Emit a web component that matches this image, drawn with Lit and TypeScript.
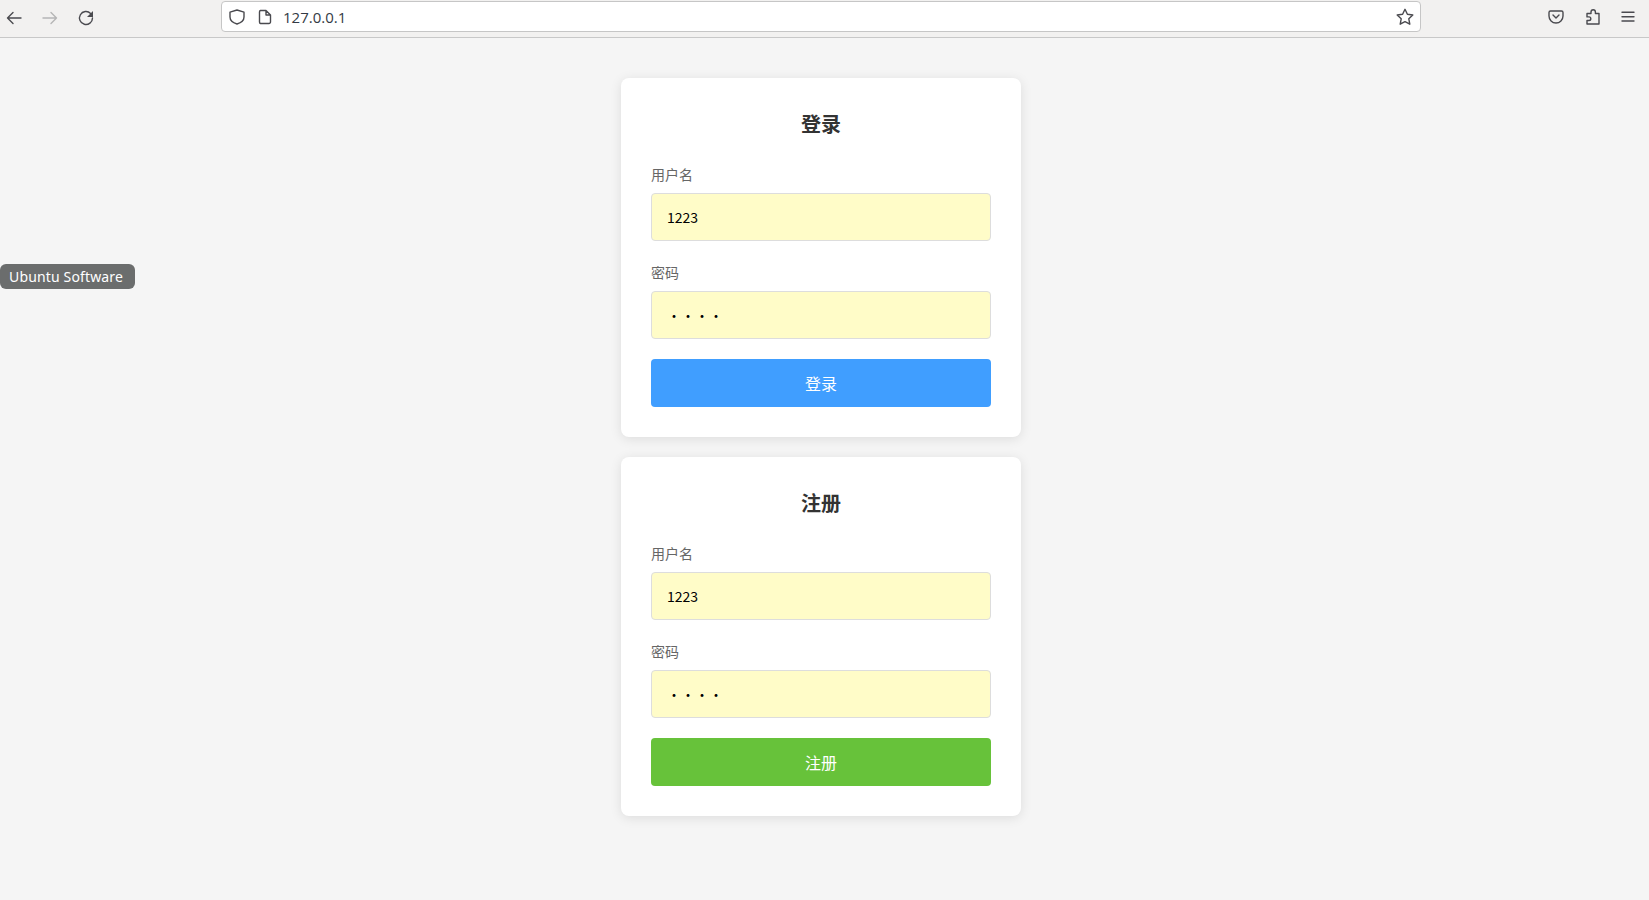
import { LitElement, html, css, svg } from "lit";
import { customElement } from "lit/decorators.js";

const ico = (body: unknown, color = "#4a4a4f", sw = 1.4) => html`<svg class="ico" width="18" height="18" viewBox="0 0 18 18" fill="none" stroke=${color} stroke-width=${sw} stroke-linecap="round" stroke-linejoin="round">${body}</svg>`;

@customElement("app-root")
export class AppRoot extends LitElement {
  static styles = css`
    :host { display: block; width: 1649px; height: 900px; background: #f5f5f5; position: relative; overflow: hidden; font-family: "Noto Sans CJK SC", "Noto Sans", sans-serif; }
    .bar { height: 37px; box-sizing: content-box; background: #f2f1f0; border-bottom: 1px solid #c8c8c8; display: flex; align-items: flex-start; padding-left: 5px; }
    .nav { display: flex; align-items: center; gap: 18px; width: 216px; padding-top: 9px; }
    .ico { display: block; flex: none; }
    .url { width: 1200px; height: 31px; margin-top: 1px; box-sizing: border-box; background: #fff; border: 1px solid #c6c6c6; border-radius: 4px; display: flex; align-items: center; padding: 0 6px; gap: 10px; font: 15px "Open Sans", "Noto Sans", sans-serif; color: #333a45; }
    .url .addr { flex: 1; margin-left: -1px; }
    .right { display: flex; align-items: center; gap: 18px; margin-left: 126px; padding-top: 8px; }
    .main { display: flex; flex-direction: column; align-items: center; gap: 20px; padding-top: 40px; width: 1642px; }
    .card { width: 400px; box-sizing: border-box; background: #fff; border-radius: 8px; padding: 30px; box-shadow: 0 2px 12px rgba(0,0,0,.1); }
    h2 { margin: 0 0 24px; height: 31px; font-size: 20px; line-height: 32px; font-weight: 700; text-align: center; color: #333; }
    .field { margin-bottom: 20px; }
    label { display: block; font-size: 14px; line-height: 22px; color: #666; margin-bottom: 8px; }
    input { display: block; width: 100%; height: 48px; box-sizing: border-box; padding: 0 15px; border: 1px solid #ddd; border-radius: 4px; background: #fffcc8; color: #000; font: 14px "Noto Sans CJK SC", sans-serif; outline: none; }
    button { display: block; width: 100%; height: 48px; border: 0; border-radius: 4px; color: #fff; font: 16px "Noto Sans CJK SC", sans-serif; }
    .blue { background: #409eff; }
    .green { background: #67c23a; }
    .tip { position: absolute; left: 0; top: 264px; width: 135px; height: 25px; box-sizing: border-box; background: #6b6d6d; border-radius: 6px; color: #fff; font: 14px/25px "Noto Sans", sans-serif; letter-spacing: .15px; padding-left: 9px; }
  `;
  card(title: string, cls: string) {
    return html`<section class="card">
      <h2>${title}</h2>
      <div class="field"><label>用户名</label><input type="text" value="1223" /></div>
      <div class="field"><label>密码</label><input type="password" value="1223" /></div>
      <button class=${cls}>${title}</button>
    </section>`;
  }
  render() {
    return html`
      <div class="bar">
        <div class="nav">
          ${ico(svg`<path d="M16 9H2.500M8 3.500L2.500 9 8 14.500"/>`)}
          ${ico(svg`<path d="M2 9h13.500M10 3.500L15.500 9 10 14.500"/>`, "#b5b5b6")}
          <svg class="ico" width="18" height="18" viewBox="0 0 18 18" fill="none" stroke="#4a4a4f" stroke-width="1.4" stroke-linecap="round"><path d="M13.600 4.400A6.500 6.500 0 1 0 15.500 9"/><path d="M16 2v6h-6z" fill="#4a4a4f" stroke="none"/></svg>
        </div>
        <div class="url">
          ${ico(svg`<path d="M9 2l7 2.200V9c0 3.500-3 5.800-7 7-4-1.200-7-3.500-7-7V4.200z"/>`)}
          ${ico(svg`<path d="M4.500 2.500h5.500l4.500 4.500v7a1.500 1.500 0 0 1-1.500 1.500H4.500A1.500 1.500 0 0 1 3.500 14V4a1.500 1.500 0 0 1 1-1.500zM10 2.500V7h4.500"/>`)}
          <span class="addr">127.0.0.1</span>
          ${ico(svg`<path d="M9 1.300l2.400 5 5.400.7-4 3.800 1 5.400L9 13.600l-4.800 2.600 1-5.400-4-3.800 5.400-.7z"/>`)}
        </div>
        <div class="right">
          ${ico(svg`<path d="M3.500 3h11A1.500 1.500 0 0 1 16 4.500V8a7 7 0 0 1-14 0V4.500A1.500 1.500 0 0 1 3.500 3zM6 7l3 3 3-3"/>`)}
          ${ico(svg`<path d="M16 16H4v-3.500h2a1.800 1.800 0 0 0 0-3.600H4V5.500h4V4a2.200 2.200 0 0 1 4.400 0v1.500H16z"/>`)}
          ${ico(svg`<path d="M3 4.300h12M3 8.700h12M3 13h12"/>`)}
        </div>
      </div>
      <main class="main">
        ${this.card("登录", "blue")}
        ${this.card("注册", "green")}
      </main>
      <div class="tip">Ubuntu Software</div>
    `;
  }
}
